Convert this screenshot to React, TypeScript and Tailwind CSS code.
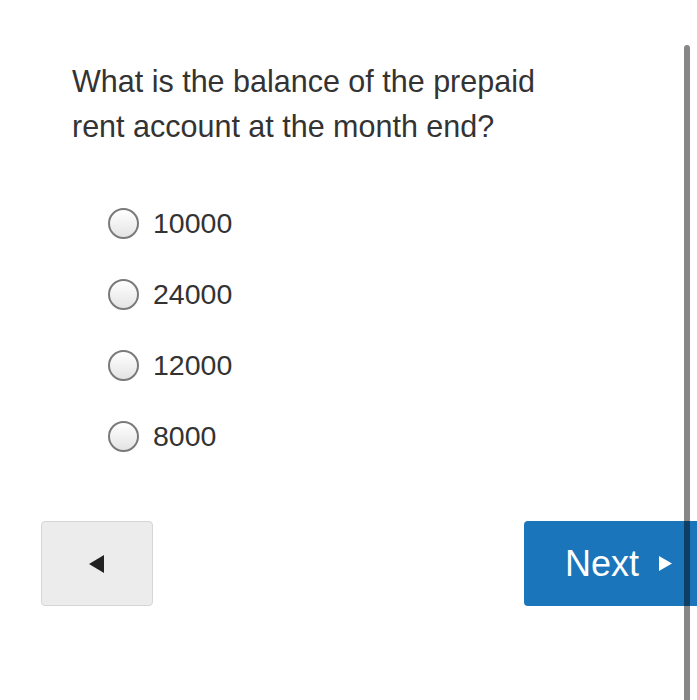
import React from "react";

const options = ["10000", "24000", "12000", "8000"];

export default function App() {
  return (
    <div className="relative w-[697px] h-[700px] bg-white overflow-hidden text-[#333333]" style={{ fontFamily: '"Liberation Sans", Arial, sans-serif' }}>
      <div className="pt-[59px] pl-[72px]">
        <p className="text-[30.5px] leading-[45px] w-[500px]">
          What is the balance of the prepaid rent account at the month end?
        </p>
        <div className="mt-[59px] pl-[36px] flex flex-col gap-[40px]">
          {options.map((o) => (
            <label key={o} className="flex items-center h-[31px]">
              <span className="w-[31px] h-[31px] rounded-full border-2 border-[#7a7a7a] bg-gradient-to-b from-[#ffffff] to-[#e4e4e4]" />
              <span className="ml-[14px] text-[28.5px] leading-none">{o}</span>
            </label>
          ))}
        </div>
      </div>
      <div className="mt-[69px] flex justify-between pl-[41px]">
        <button className="w-[112px] h-[85px] rounded-[4px] bg-[#ececec] border border-[#d6d6d6] flex items-center justify-center">
          <svg width="16" height="18" viewBox="0 0 16 18"><polygon points="15,0 15,18 0,9" fill="#222" /></svg>
        </button>
        <button className="w-[173px] h-[85px] rounded-l-[4px] bg-[#1b75bb] flex items-center pl-[41px] text-white">
          <span className="text-[36px] leading-none">Next</span>
          <svg className="ml-[20px]" width="13" height="15" viewBox="0 0 13 15"><polygon points="0,0 13,7.5 0,15" fill="#fff" /></svg>
        </button>
      </div>
      <div className="absolute left-[684px] top-[45px] w-[6px] h-[655px] rounded-t-[3px] bg-[rgba(0,0,0,0.47)]" />
    </div>
  );
}
